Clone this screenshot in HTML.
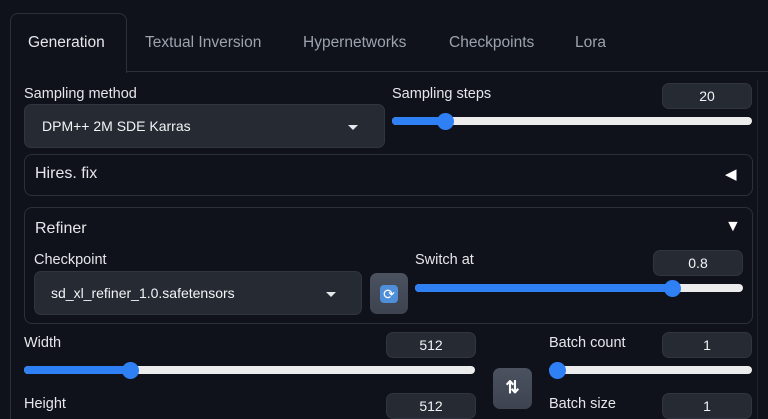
<!DOCTYPE html>
<html><head><style>
*{box-sizing:border-box;margin:0;padding:0}
body{width:768px;height:419px;overflow:hidden;background:#0f121a;font-family:"Liberation Sans",sans-serif;color:#e5e7eb;position:relative}
.a{position:absolute}
.tab{position:absolute;top:34px;font-size:15.5px;color:#9ca3af}
.lbl{position:absolute;font-size:14.5px;color:#e5e7eb}
.box{position:absolute;border:1px solid #2b313b;border-radius:8px}
.inp{position:absolute;background:#252a33;border-radius:7px;font-size:14px;color:#f3f4f6}
.num{position:absolute;background:#252a33;border:1px solid #30353f;border-radius:7px;font-size:14px;color:#f3f4f6;text-align:center;height:26px;line-height:25px;width:90px}
.tr{position:absolute;height:8px;border-radius:4px;background:#ececec}
.fill{position:absolute;left:0;top:0;height:8px;border-radius:4px;background:#2f7ff5}
.th{position:absolute;width:17px;height:17px;border-radius:50%;background:#2f7ff5;top:-4.5px;margin-left:-8px}
.arr{position:absolute;width:0;height:0;border-left:5px solid transparent;border-right:5px solid transparent;border-top:5px solid #e5e7eb}
.btn{position:absolute;background:linear-gradient(#4b5260,#3d434f);border-radius:7px}
</style></head><body>
<!-- tabs -->
<div class="a" style="left:10px;top:13px;width:117px;height:60px;border:1px solid #2b313b;border-bottom:none;border-radius:8px 8px 0 0"></div>
<div class="a" style="left:10px;top:70px;width:1px;height:349px;background:#2b313b"></div>
<div class="a" style="left:126px;top:71px;width:642px;height:1px;background:#2b313b"></div>
<div class="a" style="left:757px;top:80px;width:1px;height:339px;background:#1e232c"></div>
<div class="tab" style="left:28px;color:#e5e7eb">Generation</div>
<div class="tab" style="left:145px">Textual Inversion</div>
<div class="tab" style="left:303px">Hypernetworks</div>
<div class="tab" style="left:449px">Checkpoints</div>
<div class="tab" style="left:575px">Lora</div>

<div class="lbl" style="left:24px;top:86px">Sampling method</div>
<div class="inp" style="left:24px;top:104px;width:361px;height:44px;border:1px solid #30353f"><span class="a" style="left:17px;top:13px">DPM++ 2M SDE Karras</span><div class="arr" style="left:323px;top:20px"></div></div>
<div class="lbl" style="left:392px;top:86px">Sampling steps</div>
<div class="num" style="left:662px;top:83px">20</div>
<div class="tr" style="left:392px;top:117px;width:360px"><div class="fill" style="width:53px"></div><div class="th" style="left:53px"></div></div>

<div class="box" style="left:24px;top:154px;width:729px;height:42px"><span class="a" style="left:10px;top:10px;font-size:16px">Hires. fix</span><span class="a" style="left:700px;top:10px;font-size:15px;color:#fff">◀</span></div>

<div class="box" style="left:24px;top:207px;width:729px;height:117px">
<span class="a" style="left:10px;top:12px;font-size:16px">Refiner</span><span class="a" style="left:700px;top:10px;font-size:16px;color:#fff">▼</span>
</div>
<div class="lbl" style="left:34px;top:252px">Checkpoint</div>
<div class="inp" style="left:34px;top:271px;width:328px;height:44px;border:1px solid #30353f"><span class="a" style="left:16px;top:13px">sd_xl_refiner_1.0.safetensors</span><div class="arr" style="left:291px;top:20px"></div></div>
<div class="btn" style="left:370px;top:273px;width:38px;height:41px"><div class="a" style="left:10px;top:12px;width:18px;height:18px;border-radius:4px;background:#4f8fd9;color:#fff;font-size:14px;line-height:18px;text-align:center">⟳</div></div>
<div class="lbl" style="left:415px;top:252px">Switch at</div>
<div class="num" style="left:653px;top:250px">0.8</div>
<div class="tr" style="left:415px;top:284px;width:328px"><div class="fill" style="width:257px"></div><div class="th" style="left:257px"></div></div>

<div class="lbl" style="left:24px;top:335px">Width</div>
<div class="num" style="left:386px;top:332px">512</div>
<div class="tr" style="left:24px;top:366px;width:451px"><div class="fill" style="width:106px"></div><div class="th" style="left:106px"></div></div>
<div class="btn" style="left:493px;top:368px;width:39px;height:41px;color:#fff;font-size:17px;text-align:center;line-height:40px;font-weight:bold">⇅</div>
<div class="lbl" style="left:549px;top:335px">Batch count</div>
<div class="num" style="left:662px;top:332px">1</div>
<div class="tr" style="left:549px;top:366px;width:203px"><div class="fill" style="width:8px"></div><div class="th" style="left:8px"></div></div>

<div class="lbl" style="left:24px;top:396px">Height</div>
<div class="num" style="left:386px;top:393px">512</div>
<div class="lbl" style="left:549px;top:396px">Batch size</div>
<div class="num" style="left:662px;top:393px">1</div>
</body></html>
